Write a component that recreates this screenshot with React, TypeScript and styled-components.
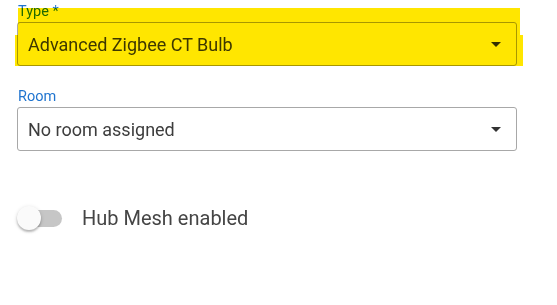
import React from 'react'
import styled, { createGlobalStyle } from 'styled-components'

const GlobalStyle = createGlobalStyle`
  html, body {
    margin: 0;
    padding: 0;
    background: #ffffff;
  }
  body {
    font-family: Roboto, 'Liberation Sans', Arial, sans-serif;
  }
`

const Page = styled.div`
  padding: 4px 0 0 17px;
  width: 500px;
`

const Field = styled.div<{ $gap?: number }>`
  position: relative;
  margin-top: ${(p) => p.$gap ?? 0}px;
`

const Label = styled.div`
  font-size: 14.5px;
  line-height: 16px;
  color: #1f74cf;
  margin: 0 0 2px 1px;
`

const SelectBox = styled.div`
  box-sizing: border-box;
  height: 44px;
  display: flex;
  align-items: center;
  justify-content: space-between;
  padding: 0 15px 0 10px;
  border: 1px solid #a8a8a8;
  border-radius: 3px;
  background: #ffffff;
  font-size: 18px;
  color: #3d3d3d;
`

const Caret = styled.span`
  width: 0;
  height: 0;
  border-left: 5px solid transparent;
  border-right: 5px solid transparent;
  border-top: 5px solid #333333;
  margin-top: 1px;
`

// marker-pen highlight drawn over the Type field
const Highlight = styled.div<{ $left: number; $top: number; $width: number; $height: number }>`
  position: absolute;
  left: ${(p) => p.$left}px;
  top: ${(p) => p.$top}px;
  width: ${(p) => p.$width}px;
  height: ${(p) => p.$height}px;
  background: #ffe600;
  mix-blend-mode: multiply;
  pointer-events: none;
`

const SwitchRow = styled.div`
  display: flex;
  align-items: center;
  gap: 20px;
  height: 40px;
  margin-top: 47px;
`

const Switch = styled.div`
  position: relative;
  width: 45px;
  height: 24px;
  flex-shrink: 0;
`

const Track = styled.div`
  position: absolute;
  left: 3px;
  right: 0;
  top: 4px;
  height: 17px;
  border-radius: 9px;
  background: #c6c6c6;
`

const Thumb = styled.div`
  position: absolute;
  left: 0;
  top: 0;
  width: 24px;
  height: 24px;
  border-radius: 50%;
  background: #fafafa;
  box-shadow: 0 2px 2px rgba(0, 0, 0, 0.22), 0 1px 4px rgba(0, 0, 0, 0.14);
`

const SwitchLabel = styled.span`
  font-size: 20px;
  color: #454545;
`

const App: React.FC = () => (
  <>
    <GlobalStyle />
    <Page>
      <Field>
        <Label>Type *</Label>
        <SelectBox>
          Advanced Zigbee CT Bulb
          <Caret />
        </SelectBox>
        <Highlight $left={1} $top={4} $width={502} $height={27} />
        <Highlight $left={-2} $top={31} $width={508} $height={31} />
      </Field>
      <Field $gap={23}>
        <Label>Room</Label>
        <SelectBox>
          No room assigned
          <Caret />
        </SelectBox>
      </Field>
      <SwitchRow>
        <Switch>
          <Track />
          <Thumb />
        </Switch>
        <SwitchLabel>Hub Mesh enabled</SwitchLabel>
      </SwitchRow>
    </Page>
  </>
)

export default App
